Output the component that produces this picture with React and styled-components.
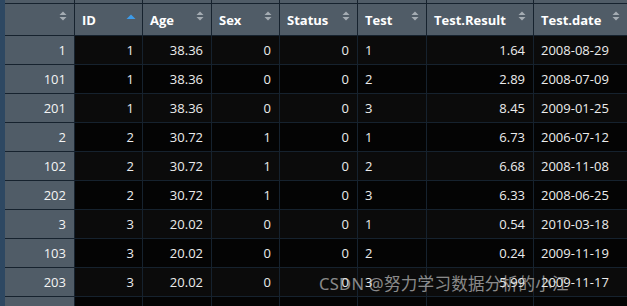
import React from 'react'
import styled, { createGlobalStyle } from 'styled-components'

const GlobalStyle = createGlobalStyle`
    html, body {
        margin:0;
        padding:0;
        background:#000;
        overflow:hidden;
    }
    body {
        font-family:"Open Sans", "Noto Sans", sans-serif;
    }
`;

const Page = styled.div`
    position:relative;
    width:627px;
    height:306px;
    display:flex;
    overflow:hidden;
`;

const Strip = styled.div`
    width:5px;
    flex:none;
    background:#2e4862;
`;

const Grid = styled.div`
    flex:1;
    display:grid;
    grid-template-columns:69px 67px 68px 67px 77px 68px 106px 1fr;
    grid-template-rows:3px 31px;
    grid-auto-rows:28px;
    gap:1px;
    background:#16222e;
    align-content:start;
`;

const Cap = styled.div`
    background:#505c67;
`;

const Head = styled.div`
    position:relative;
    background:#505c67;
    color:#fff;
    font-weight:700;
    font-size:13px;
    display:flex;
    align-items:center;
    padding:1px 7px 0;
    white-space:nowrap;
    overflow:hidden;
`;

const SortIcon = styled.svg`
    position:absolute;
    top:6px;
    right:6px;
`;

const RowName = styled.div`
    background:#505c67;
    color:#f4f4f4;
    font-size:13px;
    display:flex;
    align-items:center;
    justify-content:flex-end;
    padding:0 8px;
`;

const Cell = styled.div`
    background:${p => (p.$odd ? '#0b0b0b' : '#040404')};
    color:#ececec;
    font-size:13px;
    display:flex;
    align-items:center;
    justify-content:${p => (p.$left ? 'flex-start' : 'flex-end')};
    padding-left:${p => (p.$left ? '7px' : '0')};
    padding-right:${p => (p.$left ? '0' : '8px')};
    white-space:nowrap;
`;

const Watermark = styled.div`
    position:absolute;
    left:319px;
    top:271px;
    font-family:"Noto Sans", "Noto Sans CJK SC", sans-serif;
    font-size:16.5px;
    color:rgba(225, 225, 225, 0.6);
    white-space:nowrap;
    letter-spacing:0.3px;
    pointer-events:none;
`;

const Sorter = ({ active }) =>
    active ? (
        <SortIcon width="10" height="12" viewBox="0 0 10 12">
            <path d="M0.5 9 L5 4.5 L9.5 9 Z" fill="#3d9be9" />
        </SortIcon>
    ) : (
        <SortIcon width="10" height="12" viewBox="0 0 10 12">
            <path d="M1.5 5 L5 1.5 L8.5 5 Z" fill="#a4acb3" />
            <path d="M1.5 7 L5 10.5 L8.5 7 Z" fill="#a4acb3" />
        </SortIcon>
    );

const columns = ['ID', 'Age', 'Sex', 'Status', 'Test', 'Test.Result', 'Test.date'];

const rows = [
    ['1', 1, '38.36', 0, 0, 1, '1.64', '2008-08-29'],
    ['101', 1, '38.36', 0, 0, 2, '2.89', '2008-07-09'],
    ['201', 1, '38.36', 0, 0, 3, '8.45', '2009-01-25'],
    ['2', 2, '30.72', 1, 0, 1, '6.73', '2006-07-12'],
    ['102', 2, '30.72', 1, 0, 2, '6.68', '2008-11-08'],
    ['202', 2, '30.72', 1, 0, 3, '6.33', '2008-06-25'],
    ['3', 3, '20.02', 0, 0, 1, '0.54', '2010-03-18'],
    ['103', 3, '20.02', 0, 0, 2, '0.24', '2009-11-19'],
    ['203', 3, '20.02', 0, 0, 3, '5.99', '2009-11-17'],
    ['', '', '', '', '', '', '', ''],
];

const App = () => {
    return (
        <Page>
            <GlobalStyle />
            <Strip />
            <Grid>
                {Array.from({ length: 8 }).map((_, i) => <Cap key={'c' + i} />)}
                <Head><Sorter /></Head>
                {columns.map(c => (
                    <Head key={c}>
                        {c}
                        <Sorter active={c === 'ID'} />
                    </Head>
                ))}
                {rows.map((r, i) => (
                    <React.Fragment key={i}>
                        <RowName>{r[0]}</RowName>
                        {r.slice(1).map((v, j) => (
                            <Cell key={j} $odd={i % 2 === 0} $left={j === 4 || j === 6}>
                                {v}
                            </Cell>
                        ))}
                    </React.Fragment>
                ))}
            </Grid>
            <Watermark>CSDN @努力学习数据分析的小江</Watermark>
        </Page>
    )
}

export default App
